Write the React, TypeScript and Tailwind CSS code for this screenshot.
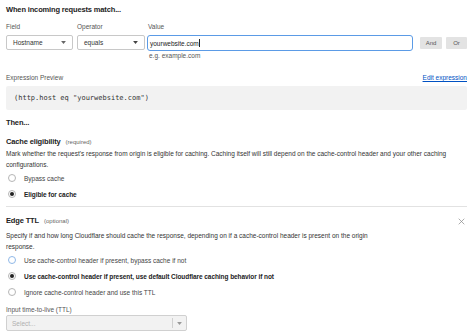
import React from 'react';

const Chevron: React.FC<{ className?: string }> = ({ className }) => (
  <svg viewBox="0 0 8 5" className={className} width="5" height="3">
    <path d="M0 0 L8 0 L4 5 Z" fill="currentColor" />
  </svg>
);

const Radio: React.FC<{ checked?: boolean; label: string; ring?: string; h?: string }> = ({ checked, label, ring, h }) => (
  <div className={`flex items-center ${h ?? 'h-[16px]'}`}>
    <span className={`w-[8px] h-[8px] rounded-full border flex items-center justify-center ml-[2px] mr-[8px] ${ring ?? 'border-[#b5b5b5]'}`}>
      {checked && <span className="w-[4px] h-[4px] rounded-full bg-[#222]" />}
    </span>
    <span className={checked ? 'font-bold text-[#222] tracking-[-0.01em]' : 'text-[#444]'}>{label}</span>
  </div>
);

export default function App() {
  return (
    <div className="w-[474px] h-[336px] overflow-hidden bg-white text-[6.5px] leading-[11px] text-[#313131] pl-[6px] pr-[7px]" style={{ fontFamily: '"Liberation Sans", Arial, sans-serif' }}>
      <div className="pt-[4px] text-[7.5px] leading-[12px] font-bold tracking-[-0.02em] text-[#222]">When incoming requests match...</div>

      <div className="flex mt-[7px]">
        <div className="w-[67px]">
          <div className="text-[#555] leading-[8px]">Field</div>
          <div className="mt-[4px] h-[15px] border border-[#c8c8c8] rounded-[2px] flex items-center justify-between px-[6px] text-[#333]">
            <span>Hostname</span>
            <Chevron className="text-[#666]" />
          </div>
        </div>
        <div className="w-[68px] ml-[4px]">
          <div className="text-[#555] leading-[8px]">Operator</div>
          <div className="mt-[4px] h-[15px] border border-[#c8c8c8] rounded-[2px] flex items-center justify-between px-[6px] text-[#333]">
            <span>equals</span>
            <Chevron className="text-[#444]" />
          </div>
        </div>
        <div className="flex-1 ml-[2px]">
          <div className="text-[#555] leading-[8px] pl-[1px]">Value</div>
          <div className="flex items-start mt-[4px]">
            <div className="flex-1 h-[16px] border-[1.5px] border-[#5b9be6] rounded-[3px] flex items-center px-[2px] text-[#222]">
              yourwebsite.com<span className="w-px h-[8px] bg-[#222]" />
            </div>
            <button className="ml-[7px] mt-[2px] w-[22px] h-[12px] bg-[#e3e3e3] rounded-[1px] text-[#555] text-[6px]">And</button>
            <button className="ml-[4px] mt-[2px] w-[21px] h-[12px] bg-[#e3e3e3] rounded-[1px] text-[#555] text-[6px]">Or</button>
          </div>
          <div className="text-[#555] leading-[9px] pl-[2px]">e.g. example.com</div>
        </div>
      </div>

      <div className="flex justify-between items-end mt-[14px] leading-[8px]">
        <span className="text-[#555]">Expression Preview</span>
        <span className="text-[#0051c3] underline">Edit expression</span>
      </div>
      <div className="mt-[4px] h-[24px] bg-[#f2f2f2] rounded-[2px] flex items-center pl-[8px] text-[7px] text-[#333]" style={{ fontFamily: '"DejaVu Sans Mono", monospace' }}>
        (http.host eq "yourwebsite.com")
      </div>

      <div className="mt-[7px] h-[12px] text-[7.5px] leading-[12px] font-bold tracking-[-0.02em] text-[#222]">Then...</div>

      <div className="mt-[7px] h-[12px] flex items-baseline leading-[12px]">
        <span className="text-[7.5px] font-bold tracking-[-0.02em] text-[#222]">Cache eligibility</span>
        <span className="ml-[5px] text-[#666] text-[6px]">(required)</span>
      </div>
      <div className="text-[#333] leading-[11px]">
        Mark whether the request's response from origin is eligible for caching. Caching itself will still depend on the cache-control header and your other caching
        <br />
        configurations.
      </div>
      <div>
        <Radio label="Bypass cache" />
        <Radio label="Eligible for cache" checked />
      </div>

      <div className="mt-[4px] border-t border-[#e2e2e2]" />

      <div className="mt-[8px] h-[12px] flex items-center justify-between leading-[12px]">
        <div className="flex items-baseline">
          <span className="text-[7.5px] font-bold tracking-[-0.02em] text-[#222]">Edge TTL</span>
          <span className="ml-[5px] text-[#666] text-[6px]">(optional)</span>
        </div>
        <svg viewBox="0 0 10 10" width="7" height="7" className="mr-[2px] text-[#888]">
          <path d="M1 1 L9 9 M9 1 L1 9" stroke="currentColor" strokeWidth="1" />
        </svg>
      </div>
      <div className="mt-[3px] text-[#333] leading-[11px]">
        Specify if and how long Cloudflare should cache the response, depending on if a cache-control header is present on the origin
        <br />
        response.
      </div>
      <div>
        <Radio label="Use cache-control header if present, bypass cache if not" ring="border-[#8fb8e8]" />
        <Radio label="Use cache-control header if present, use default Cloudflare caching behavior if not" checked />
        <Radio label="Ignore cache-control header and use this TTL" />
      </div>

      <div className="mt-[5px] text-[#555] leading-[10px]">Input time-to-live (TTL)</div>
      <div className="w-[181px] h-[16px] border border-[#d0d0d0] rounded-[2px] bg-[#f2f2f2] flex items-center">
        <span className="flex-1 pl-[5px] text-[#b0b0b0]">Select...</span>
        <span className="w-[14px] h-[10px] border-l border-[#d0d0d0] flex items-center justify-center text-[#999]">
          <Chevron />
        </span>
      </div>
    </div>
  );
}
